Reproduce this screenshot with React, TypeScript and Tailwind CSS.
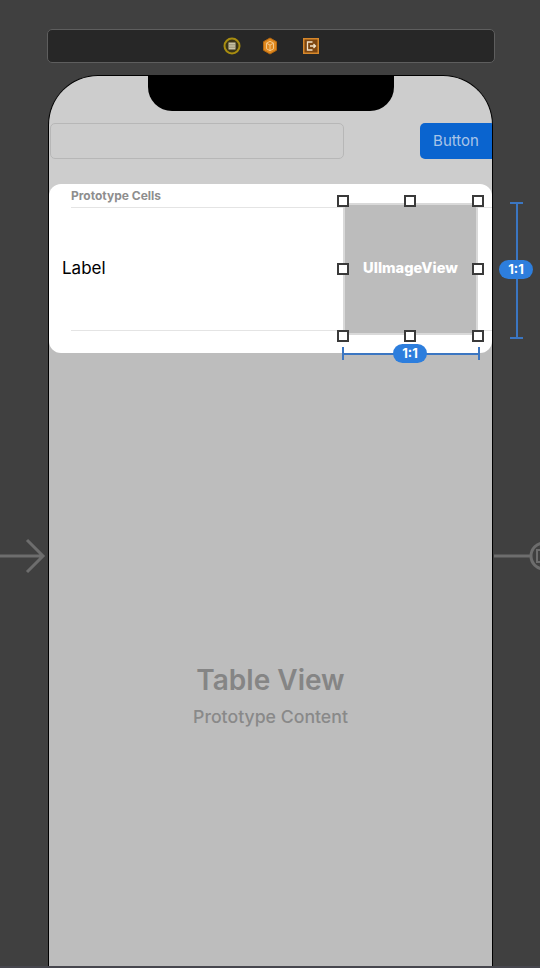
import React from 'react';

// Scene dock icons (view controller, first responder, exit)
function DockIcons() {
  return (
    <div className="flex items-center">
      <svg width="18" height="18" viewBox="0 0 18 18" className="mr-[21px]">
        <circle cx="9" cy="9" r="7.5" fill="#3b3518" stroke="#a88d10" strokeWidth="2" />
        <rect x="5.5" y="5.5" width="7" height="7" fill="#c9c3a4" />
        <path d="M5.5 7.8h7M5.5 10.2h7" stroke="#8d866a" strokeWidth="0.8" />
      </svg>
      <svg width="16" height="18" viewBox="0 0 16 18" className="mr-[25px]">
        <path d="M8 1l6.5 3.7v8.6L8 17l-6.5-3.7V4.7z" fill="#e0891f" stroke="#b7680e" strokeWidth="1" />
        <path d="M4.5 6.2L8 4.3l3.5 1.9v5.6L8 13.7l-3.5-1.9z" fill="none" stroke="#f6c98a" strokeWidth="1" />
        <path d="M4.5 6.2L8 8.1l3.5-1.9M8 8.1v5.6" fill="none" stroke="#f6c98a" strokeWidth="1" />
      </svg>
      <svg width="16" height="16" viewBox="0 0 16 16">
        <rect x="0.75" y="0.75" width="14.5" height="14.5" fill="#7d4611" stroke="#d7882b" strokeWidth="1.5" />
        <path d="M9.5 4H4.5v8h5" fill="none" stroke="#f2e2c8" strokeWidth="1.3" />
        <path d="M7 8h5.5M10.5 6l2 2-2 2" fill="none" stroke="#f2e2c8" strokeWidth="1.3" />
      </svg>
    </div>
  );
}

function Handle({ x, y }: { x: number; y: number }) {
  return (
    <div
      className="absolute w-[12px] h-[12px] bg-white border-2 border-[#3a3a3a]"
      style={{ left: x - 6, top: y - 6 }}
    />
  );
}

function Badge() {
  return (
    <div className="h-[19px] w-[34px] rounded-full bg-[#2d7edd] flex items-center justify-center text-white text-[13px] font-bold leading-none">
      1:1
    </div>
  );
}

const HANDLES = [
  [343, 201], [410, 201], [478, 201],
  [343, 269], [478, 269],
  [343, 336], [410, 336], [478, 336],
];

export default function App() {
  return (
    <div className="relative w-[540px] h-[968px] bg-[#404040] overflow-hidden flex flex-col font-['Inter','Liberation_Sans',sans-serif]">
      {/* scene dock */}
      <div className="mt-[29px] ml-[47px] w-[448px] h-[34px] shrink-0 rounded-[5px] border border-[#5e5e5e] bg-[#272727] flex items-center justify-center">
        <DockIcons />
      </div>

      {/* device frame */}
      <div className="mt-[12px] ml-[48px] w-[445px] flex-1 border-x border-t border-black rounded-t-[50px] bg-[#cdcdcd] overflow-hidden flex flex-col">
        <div className="self-center w-[246px] h-[35px] shrink-0 bg-black rounded-b-[24px]" />

        <div className="mt-[12px] h-[36px] shrink-0 flex justify-between">
          <div className="w-[294px] ml-px rounded-[5px] border border-[#b7b7b7]" />
          <div className="w-[72px] rounded-l-[5px] bg-[#0a64cf] flex items-center justify-center text-[15px] text-[#a9c4e8]">
            Button
          </div>
        </div>

        {/* table view */}
        <div className="mt-[25px] flex-1 flex flex-col bg-[#bdbdbd]">
          <div className="bg-[linear-gradient(#cdcdcd_50%,#bdbdbd_50%)]">
            <div className="h-[169px] bg-white rounded-[12px] flex flex-col">
              <div className="h-[19px] pl-[22px] pt-[5px] text-[12px] font-bold text-[#8e8e8e] leading-[14px]">
                Prototype Cells
              </div>
              <div className="relative h-[132px] flex items-center">
                <div className="absolute top-[4px] left-[22px] right-0 h-px bg-[#e4e4e4]" />
                <div className="absolute top-[127px] left-[22px] right-0 h-px bg-[#e4e4e4]" />
                <div className="flex-1 pl-[13px] text-[17px] text-black">Label</div>
                <div className="relative mr-[14px] w-[135px] h-[132px] pb-[1px] bg-[#bcbcbc] border-2 border-[#d9d9d9] flex items-center justify-center text-[14.6px] font-extrabold text-white">
                  UIImageView
                </div>
              </div>
            </div>
          </div>

          <div className="mt-[310px] text-center text-[28px] leading-[34px] font-semibold text-[#858585]">
            Table View
          </div>
          <div className="mt-[9px] text-center text-[17.7px] leading-[22px] font-medium text-[#898989]">
            Prototype Content
          </div>
        </div>
      </div>

      {/* selection handles */}
      {HANDLES.map(([x, y]) => (
        <Handle key={`${x}-${y}`} x={x} y={y} />
      ))}

      {/* aspect ratio constraints */}
      <div className="absolute left-[510px] top-[202px] w-[13px] h-[137px] flex flex-col items-center">
        <div className="w-[13px] h-[2px] bg-[#3b76c2]" />
        <div className="w-[2px] flex-1 bg-[#3b76c2]" />
        <div className="w-[13px] h-[2px] bg-[#3b76c2]" />
      </div>
      <div className="absolute left-[499px] top-[260px]">
        <Badge />
      </div>
      <div className="absolute left-[342px] top-[347px] w-[138px] h-[13px] flex items-center">
        <div className="w-[2px] h-[13px] bg-[#3b76c2]" />
        <div className="h-[2px] flex-1 bg-[#3b76c2]" />
        <div className="w-[2px] h-[13px] bg-[#3b76c2]" />
      </div>
      <div className="absolute left-[393px] top-[344px]">
        <Badge />
      </div>

      {/* segue arrows */}
      <svg className="absolute left-0 top-[536px]" width="48" height="40" viewBox="0 0 48 40">
        <path d="M0 20h43M27 4l16 16-16 16" fill="none" stroke="#6d6d6d" strokeWidth="3" />
      </svg>
      <svg className="absolute left-[494px] top-[536px]" width="46" height="40" viewBox="0 0 46 40">
        <path d="M0 20h36" stroke="#6d6d6d" strokeWidth="3" />
        <circle cx="50" cy="20" r="13" fill="none" stroke="#6d6d6d" strokeWidth="3" />
        <rect x="43" y="14" width="6" height="12" fill="none" stroke="#6d6d6d" strokeWidth="2" />
      </svg>

      <div className="absolute left-0 right-0 bottom-0 h-[2px] bg-[#47474e]" />
    </div>
  );
}
